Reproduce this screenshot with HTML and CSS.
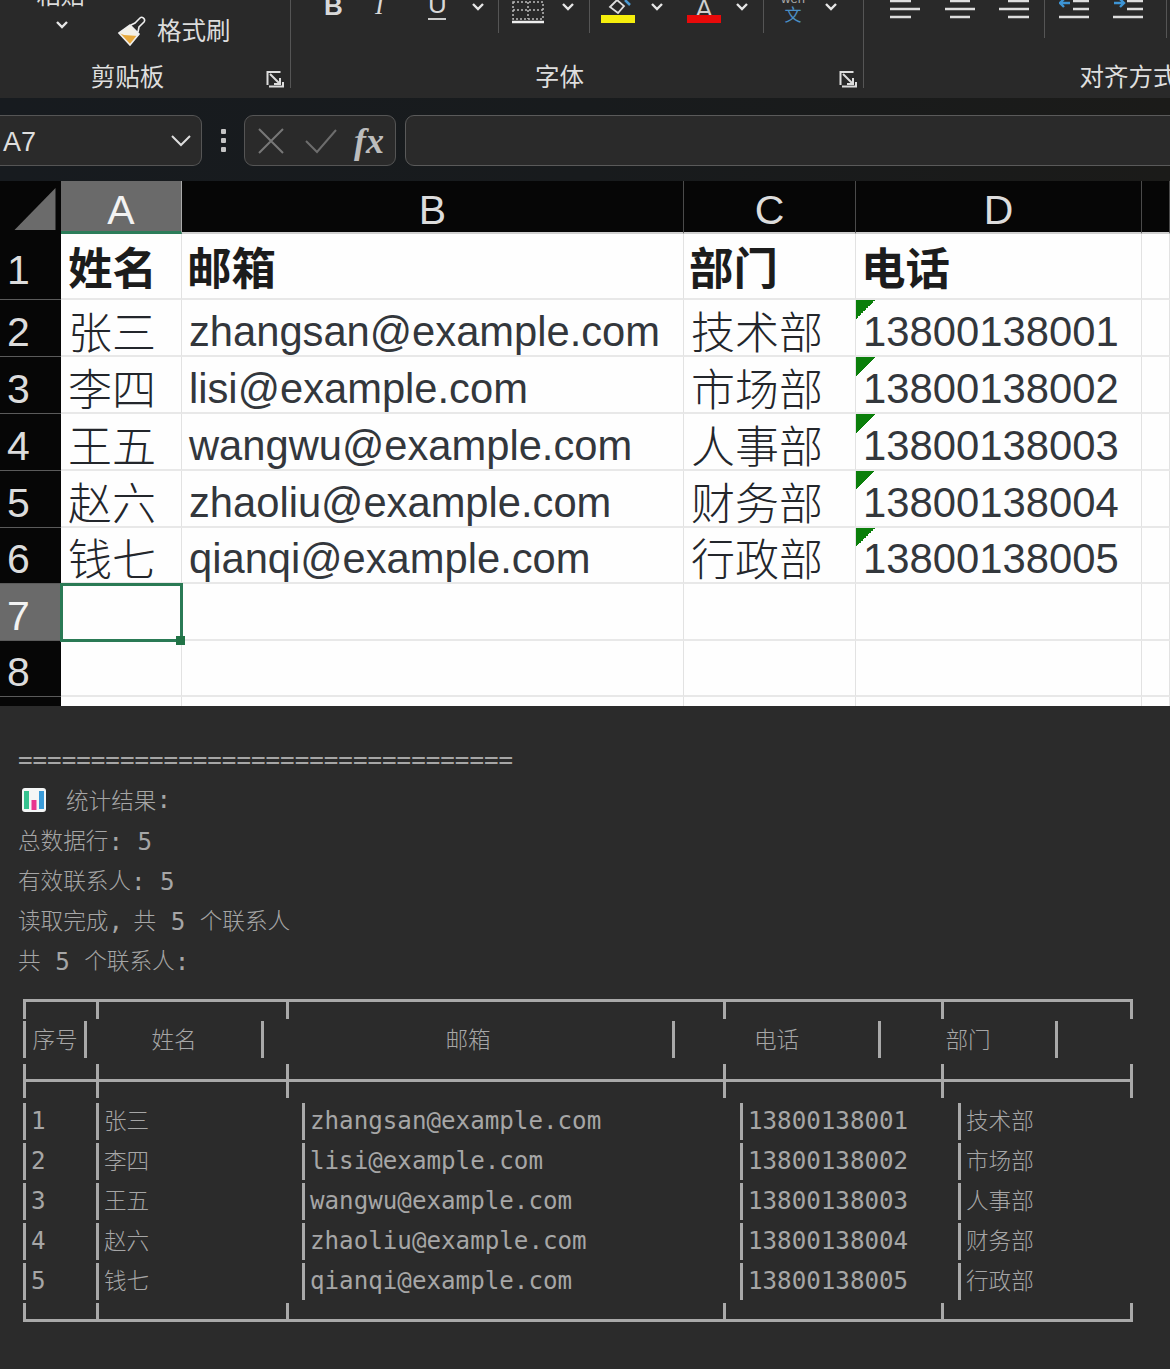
FILE: index.html
```html
<!DOCTYPE html>
<html lang="zh-CN">
<head>
<meta charset="utf-8">
<title>联系人</title>
<link rel="stylesheet" href="styles.css">
</head>
<body>
<svg class="defs" width="0" height="0">
  <symbol id="chev" viewBox="0 0 14 10"><path d="M2 2l5 5 5-5" fill="none" stroke="#e6e6e6" stroke-width="2.4"/></symbol>
  <symbol id="launch" viewBox="0 0 18 18"><path d="M1.5 15V2h13M4 4l10 10M14 8v6H8M3 16.500h14V12" fill="none" stroke="#ddd" stroke-width="2"/></symbol>
</svg>
<main class="excel">
  <section class="ribbon">
    <div class="group clip-group">
      <div class="tools clip-tools">
        <div class="paste"><span class="paste-text">粘贴</span><svg class="chev"><use href="#chev"/></svg></div>
        <div class="painter">
          <svg class="brush" viewBox="0 0 32 32"><path d="M2 19l11-8 9 9-9 11z" fill="#e8a93c"/><path d="M2 19l11-8 9 9-1 2-14-1z" fill="#f3f0e6"/><path d="M2 19l11-8 9 9-9 11zM14 11l4-2 5-5c2-2 6 1 4 4l-5 5-1 5" fill="none" stroke="#eee" stroke-width="1.600"/></svg>
          <span>格式刷</span>
        </div>
      </div>
      <div class="foot"><span class="label">剪贴板</span><svg class="launch"><use href="#launch"/></svg></div>
    </div>
    <div class="group font-group">
      <div class="tools font-tools">
        <span class="t-b">B</span>
        <span class="t-i">I</span>
        <span class="t-u">U</span>
        <svg class="chev c-u"><use href="#chev"/></svg>
        <i class="sep s1"></i>
        <svg class="borders" viewBox="0 0 32 24"><path d="M1 2h30v17H1zM16 2v17M1 10h30" fill="none" stroke="#bbb" stroke-width="1.500" stroke-dasharray="2 2"/><path d="M0 22h32" stroke="#eee" stroke-width="2.500"/></svg>
        <svg class="chev c-b"><use href="#chev"/></svg>
        <i class="sep s2"></i>
        <div class="swatch fill"><svg viewBox="0 0 34 14"><path d="M9 7l7-7 7 6-6 7z" fill="none" stroke="#ddd" stroke-width="1.800"/><path d="M24 0l5 5" stroke="#4a9ad4" stroke-width="2.500"/></svg><b class="bar yellow"></b></div>
        <svg class="chev c-f"><use href="#chev"/></svg>
        <div class="swatch color"><span class="letter-a">A</span><b class="bar red"></b></div>
        <svg class="chev c-a"><use href="#chev"/></svg>
        <i class="sep s3"></i>
        <div class="wen"><span class="wen-top">wén</span><span class="wen-cn">文</span></div>
        <svg class="chev c-w"><use href="#chev"/></svg>
      </div>
      <div class="foot"><span class="label">字体</span><svg class="launch"><use href="#launch"/></svg></div>
    </div>
    <div class="group align-group">
      <div class="tools align-tools">
        <svg class="lines" viewBox="0 0 30 24"><path d="M0 3h21M0 11h30M0 19h21" stroke="#ddd" stroke-width="2.400"/></svg>
        <svg class="lines" viewBox="0 0 30 24"><path d="M5 3h20M0 11h30M5 19h20" stroke="#ddd" stroke-width="2.400"/></svg>
        <svg class="lines" viewBox="0 0 30 24"><path d="M9 3h21M0 11h30M9 19h21" stroke="#ddd" stroke-width="2.400"/></svg>
        <i class="sep s4"></i>
        <svg class="lines" viewBox="0 0 30 24"><path d="M14 3h16M14 11h16M0 19h30" stroke="#ddd" stroke-width="2.400"/><path d="M11 5H1M5 1L1 5l4 4" stroke="#3d94d4" stroke-width="2.400" fill="none"/></svg>
        <svg class="lines" viewBox="0 0 30 24"><path d="M14 3h16M14 11h16M0 19h30" stroke="#ddd" stroke-width="2.400"/><path d="M1 5h10M7 1l4 4-4 4" stroke="#3d94d4" stroke-width="2.400" fill="none"/></svg>
        <i class="sep s5"></i>
      </div>
      <div class="foot"><span class="label">对齐方式</span></div>
    </div>
  </section>

  <section class="formula">
    <div class="namebox"><span>A7</span><svg class="fchev" viewBox="0 0 22 14"><path d="M2 2l9 9 9-9" fill="none" stroke="#ddd" stroke-width="2"/></svg></div>
    <div class="dots"><i></i><i></i><i></i></div>
    <div class="fxbox">
      <svg class="mark" viewBox="0 0 28 28"><path d="M2 2l24 24M26 2L2 26" stroke="#777" stroke-width="2" fill="none"/></svg>
      <svg class="mark" viewBox="0 0 34 28"><path d="M2 14l11 11L32 3" stroke="#6d6d6d" stroke-width="2" fill="none"/></svg>
      <span class="fx">fx</span>
    </div>
    <div class="input"></div>
  </section>

  <section class="sheet">
    <div class="hd corner"><svg viewBox="0 0 42 43"><path d="M42 0v43H0z" fill="#6b6b6b"/></svg></div>
    <div class="hd col sel">A</div><div class="hd col">B</div><div class="hd col">C</div><div class="hd col">D</div><div class="hd col"></div>

    <div class="hd row">1</div><div class="c head">姓名</div><div class="c head">邮箱</div><div class="c head">部门</div><div class="c head">电话</div><div class="c"></div>
    <div class="hd row">2</div><div class="c cn">张三</div><div class="c en">zhangsan@example.com</div><div class="c cn">技术部</div><div class="c num">13800138001</div><div class="c"></div>
    <div class="hd row">3</div><div class="c cn">李四</div><div class="c en">lisi@example.com</div><div class="c cn">市场部</div><div class="c num">13800138002</div><div class="c"></div>
    <div class="hd row">4</div><div class="c cn">王五</div><div class="c en">wangwu@example.com</div><div class="c cn">人事部</div><div class="c num">13800138003</div><div class="c"></div>
    <div class="hd row">5</div><div class="c cn">赵六</div><div class="c en">zhaoliu@example.com</div><div class="c cn">财务部</div><div class="c num">13800138004</div><div class="c"></div>
    <div class="hd row">6</div><div class="c cn">钱七</div><div class="c en">qianqi@example.com</div><div class="c cn">行政部</div><div class="c num">13800138005</div><div class="c"></div>
    <div class="hd row sel">7</div><div class="c active"><i class="handle"></i></div><div class="c"></div><div class="c"></div><div class="c"></div><div class="c"></div>
    <div class="hd row">8</div><div class="c"></div><div class="c"></div><div class="c"></div><div class="c"></div><div class="c"></div>
    <div class="hd row"></div><div class="c"></div><div class="c"></div><div class="c"></div><div class="c"></div><div class="c"></div>
  </section>
</main>

<section class="term">
  <div class="line">==================================</div>
  <div class="line stat"><svg class="emoji" viewBox="0 0 24 24"><rect width="24" height="24" rx="3" fill="#f4f6f6"/><rect x="2" y="3" width="5" height="18" fill="#35c28f"/><rect x="9.500" y="12" width="5" height="10" fill="#e8358f"/><rect x="17" y="3" width="5" height="18" fill="#3a9bd8"/></svg><span class="zh">统计结果</span>:</div>
  <div class="line"><span class="zh">总数据行</span>: 5</div>
  <div class="line"><span class="zh">有效联系人</span>: 5</div>
  <div class="line"><span class="zh">读取完成</span><span class="comma">,</span> <span class="zh">共</span> 5 <span class="zh">个联系人</span></div>
  <div class="line"><span class="zh">共</span> 5 <span class="zh">个联系人</span>:</div>

  <div class="tbl">
    <div class="rule top"><i></i><i></i><i></i><i></i><i></i><i></i></div>
    <div class="trow thead"><span class="zh">序号</span><span class="zh">姓名</span><span class="zh">邮箱</span><span class="zh">电话</span><span class="zh">部门</span><span></span></div>
    <div class="rule mid"><i></i><i></i><i></i><i></i><i></i><i></i></div>
    <div class="trow tdata"><span>1</span><span class="zh">张三</span><span>zhangsan@example.com</span><span>13800138001</span><span class="zh">技术部</span></div>
    <div class="trow tdata"><span>2</span><span class="zh">李四</span><span>lisi@example.com</span><span>13800138002</span><span class="zh">市场部</span></div>
    <div class="trow tdata"><span>3</span><span class="zh">王五</span><span>wangwu@example.com</span><span>13800138003</span><span class="zh">人事部</span></div>
    <div class="trow tdata"><span>4</span><span class="zh">赵六</span><span>zhaoliu@example.com</span><span>13800138004</span><span class="zh">财务部</span></div>
    <div class="trow tdata"><span>5</span><span class="zh">钱七</span><span>qianqi@example.com</span><span>13800138005</span><span class="zh">行政部</span></div>
    <div class="rule bottom"><i></i><i></i><i></i><i></i><i></i><i></i></div>
  </div>
</section>
</body>
</html>
```

FILE: styles.css
```css
* { box-sizing: border-box; }
html, body { margin: 0; padding: 0; }
body {
  width: 1170px;
  height: 1369px;
  overflow: hidden;
  background: #2b2b2b;
  font-family: "Liberation Sans", "Noto Sans CJK SC", sans-serif;
}
.defs { display: block; height: 0; }
i, b { display: block; }

/* Ribbon */
.excel { height: 706px; overflow: hidden; background: #171a1d; }
.ribbon {
  display: flex;
  height: 98px;
  overflow: hidden;
  background: #292929;
  color: #dcdcdc;
  font-family: "Noto Sans CJK SC", sans-serif;
}
.group { flex: none; display: flex; flex-direction: column; height: 88px; border-right: 1px solid #555; }
.clip-group { width: 291px; }
.font-group { width: 573px; }
.align-group { width: 540px; border: 0; }
.tools { flex: none; height: 59px; position: relative; }
.foot { display: flex; align-items: flex-start; height: 29px; }
.label { flex: 1; padding-right: 11px; text-align: center; font-size: 24.500px; line-height: 34px; color: #dedede; }
.launch { flex: none; width: 18px; height: 18px; margin: 11px 6px 0 0; }
.chev { display: block; flex: none; width: 14px; height: 10px; }

.clip-tools { display: flex; align-items: flex-start; }
.paste { width: 117px; display: flex; flex-direction: column; align-items: center; margin-top: -18px; }
.paste-text { font-size: 24px; line-height: 24px; height: 25px; width: 117px; text-align: center; padding-left: 4px; }
.paste .chev { margin: 13px 0 0 7px; }
.painter { display: flex; align-items: center; gap: 8px; margin-top: 13px; font-size: 24.500px; line-height: 34px; }
.brush { width: 32px; height: 32px; }

.font-tools { display: flex; align-items: flex-start; overflow: visible; font-family: "Liberation Sans", sans-serif; }
.font-tools > * { flex: none; }
.t-b, .t-i, .t-u { font-size: 26px; line-height: 30px; margin-top: -9px; color: #d8d8d8; }
.t-b { font-weight: 700; margin-left: 33px; width: 18px; }
.t-i { margin-left: 33px; width: 10px; font-style: italic; font-family: "Liberation Serif", serif; }
.t-u { margin-left: 43px; width: 18px; border-bottom: 2px solid #ccc; height: 29px; line-height: 27px; }
.c-u { margin: 2px 0 0 25px; }
.sep { flex: none; width: 1px; height: 33px; background: #555; }
.s1 { margin-left: 13px; }
.borders { width: 32px; height: 24px; margin-left: 13px; }
.c-b { margin: 2px 0 0 17px; }
.s2 { margin-left: 14px; }
.swatch { width: 34px; height: 23px; position: relative; display: flex; flex-direction: column; justify-content: flex-end; }
.fill { margin-left: 11px; }
.fill svg { display: block; width: 34px; height: 14px; margin-bottom: 1px; }
.bar { height: 8px; width: 34px; }
.yellow { background: #f5ee0c; }
.red { background: #e80a0a; }
.c-f { margin: 2px 0 0 15px; }
.color { margin-left: 23px; overflow: hidden; }
.letter-a { font-size: 27px; line-height: 20px; height: 15px; text-align: center; color: #cfcfcf; }
.c-a { margin: 2px 0 0 14px; }
.s3 { margin-left: 14px; }
.wen { width: 30px; margin-left: 14px; margin-top: -8px; display: flex; flex-direction: column; align-items: center; color: #4a8fc4; }
.wen-top { font-size: 13px; line-height: 13px; height: 13px; color: #aaa; }
.wen-cn { font-size: 17px; line-height: 18px; font-family: "Noto Sans CJK SC", sans-serif; }
.c-w { margin: 2px 0 0 16px; }

.align-tools { display: flex; align-items: flex-start; margin-top: -2px; height: 61px; }
.lines { flex: none; width: 30px; height: 24px; }
.align-tools .lines:nth-child(1) { margin-left: 26px; }
.align-tools .lines:nth-child(2) { margin-left: 25px; }
.align-tools .lines:nth-child(3) { margin-left: 24px; }
.align-tools .sep { height: 40px; }
.s4 { margin: 0 0 0 15px; }
.align-tools .lines:nth-child(5) { margin-left: 14px; }
.align-tools .lines:nth-child(6) { margin-left: 24px; }
.s5 { margin-left: 23px; }

/* Formula bar */
.formula {
  display: flex;
  align-items: center;
  height: 83px;
  padding-top: 2px;
  background: linear-gradient(90deg, #171b1f, #181b1d 50%, #1b1b19);
}
.namebox {
  flex: none;
  width: 202px;
  height: 51px;
  padding: 0 9px 0 3px;
  display: flex;
  align-items: center;
  justify-content: space-between;
  background: #2a2a2a;
  border: 1px solid #555;
  border-left: 0;
  border-radius: 0 9px 9px 0;
  color: #dedede;
  font-size: 27px;
}
.namebox span { padding-top: 3px; }
.fchev { width: 22px; height: 14px; }
.dots { flex: none; width: 42px; display: flex; flex-direction: column; align-items: center; gap: 4px; }
.dots i { width: 5px; height: 5px; background: #c4c4c4; border-radius: 1px; }
.fxbox {
  flex: none;
  width: 152px;
  height: 51px;
  display: flex;
  align-items: center;
  padding-left: 12px;
  background: #2a2a2a;
  border: 1px solid #555;
  border-radius: 9px;
}
.mark { display: block; flex: none; }
.mark:nth-child(1) { width: 28px; height: 28px; }
.mark:nth-child(2) { width: 34px; height: 28px; margin-left: 19px; }
.fx { margin-left: 16px; font-family: "Liberation Serif", serif; font-style: italic; font-weight: 700; font-size: 36px; line-height: 40px; color: #bdbdbd; }
.input {
  flex: none;
  width: 800px;
  height: 51px;
  margin-left: 9px;
  background: #2a2a2a;
  border: 1px solid #5a5a5a;
  border-radius: 9px 0 0 9px;
}

/* Sheet */
.sheet {
  display: grid;
  grid-template-columns: 61px 121px 502px 172px 286px 28px;
  grid-template-rows: 53px 66px 57px 57px 57px 57px 56px 57px 56px 16px;
  height: 525px;
  overflow: hidden;
}
.hd {
  background: #060606;
  color: #dcdcdc;
  font-size: 41px;
  display: flex;
  align-items: center;
  justify-content: center;
  overflow: hidden;
}
.corner { padding: 7px 5px 4px 14px; align-items: stretch; }
.corner svg { display: block; width: 42px; height: 42px; }
.col { border-right: 1px solid #4a4a4a; padding-top: 8px; border-bottom: 2px solid #d0d0d0; }
.col.sel { background: #6a6a6a; border-right-color: #aaa; border-bottom: 3px solid #2c7d5a; color: #f2f2f2; }
.row { padding: 8px 24px 0 0; border-bottom: 1px solid #5a5a5a; }
.row.sel { background: #6a6a6a; color: #f2f2f2; }
.c {
  background: #fefefe;
  border-right: 1px solid #e2e2e2;
  border-bottom: 2px solid #e8e8e8;
  color: #23262b;
  display: flex;
  align-items: center;
  white-space: nowrap;
  overflow: visible;
}
.head { font-family: "Noto Sans CJK SC", sans-serif; font-size: 44.500px; line-height: 52px; font-weight: 700; padding: 0 0 0 7px; color: #1c1c1c; }
.head ~ .head { padding-left: 5px; }
.cn { font-family: "Noto Sans CJK SC", sans-serif; font-size: 44px; line-height: 50px; font-weight: 300; padding: 4px 0 0 7px; }
.en { font-size: 41.700px; line-height: 48px; padding: 8px 0 0 7px; color: #33373c; }
.num {
  font-size: 41.800px;
  line-height: 48px;
  padding: 8px 0 0 7px;
  color: #33373c;
  background: linear-gradient(135deg, #0b7f0b 50%, transparent 50%) no-repeat 0 0 / 19px 19px, #fefefe;
}
.active {
  position: relative;
  margin: -1px -1px -1px -1px;
  z-index: 1;
  border: 3px solid #2a7a55;
  background: #fefefe;
}
.handle { position: absolute; right: -5px; bottom: -6px; width: 9px; height: 9px; background: #217346; }

/* Terminal */
.term {
  padding: 34px 0 0 18px;
  font-family: "DejaVu Sans Mono", "Noto Sans CJK SC", monospace;
  font-size: 24.200px;
  color: #a6a6a6;
}
.zh { font-family: "Noto Sans CJK SC", sans-serif; font-size: 22.600px; font-weight: 300; color: #a6a6a6; }
.line { height: 40px; line-height: 40px; white-space: pre; }
.line .zh { vertical-align: 1px; }
.comma { margin-right: -4px; }
.stat { display: flex; align-items: center; }
.emoji { width: 24px; height: 24px; margin: 0 20px 0 4px; flex: none; }
.tbl { width: 1109px; margin-left: 5px; }
.rule { display: grid; grid-template-columns: 73px 190px 437px 218px 189px 3px; width: 1110px; }
.rule i { border-left: 3px solid #a9a9a9; }
.rule.top { margin-top: 19px; height: 20px; border-top: 3px solid #a9a9a9; }
.rule.mid { height: 40px; padding: 3px 0; background: linear-gradient(#a9a9a9, #a9a9a9) no-repeat 0 18px / 100% 3px; margin-top: 1px; }
.rule.bottom { margin-top: 2px; height: 19px; border-bottom: 3px solid #a9a9a9; }
.trow { display: grid; height: 40px; align-items: center; }
.trow > span { display: block; height: 37px; line-height: 37px; border-left: 3px solid #a9a9a9; white-space: pre; }
.trow > .zh { line-height: 33px; }
.thead { grid-template-columns: 61px 177px 411px 206px 177px 3px; height: 41px; }
.thead > span { text-align: center; }
.thead > .zh { line-height: 35px; }
.tdata { grid-template-columns: 73px 206px 438px 218px 150px; }
.tdata > span { padding-left: 5px; }
```
